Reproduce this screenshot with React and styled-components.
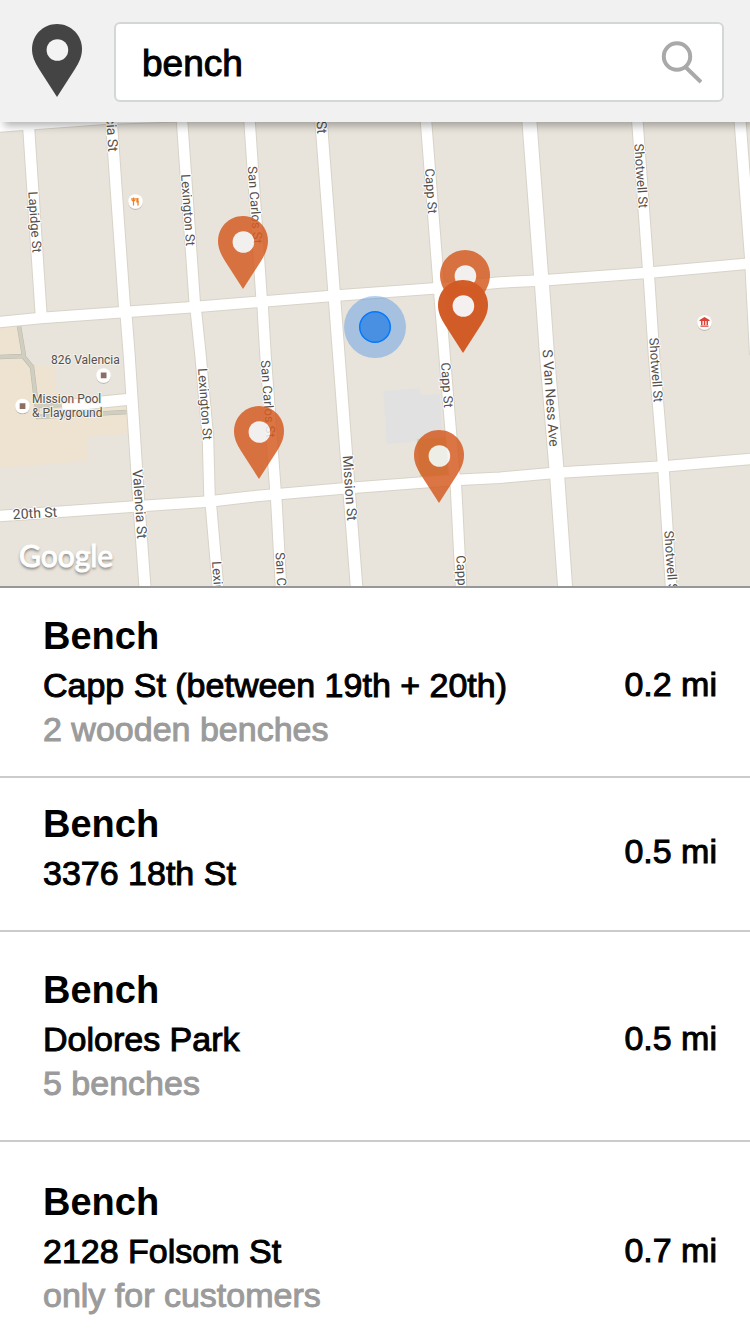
import React, { useState } from "react";
import styled, { createGlobalStyle } from "styled-components";

const MAP_WIDTH = 750;
const MAP_HEIGHT = 464;

const GlobalStyle = createGlobalStyle`
  *, *::before, *::after { box-sizing: border-box; }
  body {
    margin: 0;
    background: #fff;
    color: #000;
    font-family: "Liberation Sans", Arial, Helvetica, sans-serif;
  }
`;

const Page = styled.main`
  display: flex;
  flex-direction: column;
  width: 100%;
`;

const Header = styled.header`
  position: relative;
  z-index: 1;
  display: flex;
  align-items: center;
  gap: 32px;
  padding: 22px 26px 20px 32px;
  background: #f1f1f1;
  box-shadow: 4px 4px 8px rgba(0, 0, 0, 0.3);
`;

const LogoLink = styled.a`
  display: block;
  flex: none;
  padding-bottom: 4px;
  line-height: 0;
`;

const SearchForm = styled.form`
  display: flex;
  flex: 1;
  align-items: center;
  min-width: 0;
  height: 80px;
  padding: 0 20px 0 26px;
  border: 2px solid #d3d7d6;
  border-radius: 6px;
  background: #fff;
`;

const SearchInput = styled.input`
  flex: 1;
  min-width: 0;
  height: 72px;
  padding: 4px 0 0;
  border: 0;
  outline: 0;
  background: transparent;
  color: #000;
  font: 37px "Liberation Sans", Arial, Helvetica, sans-serif;
  -webkit-text-stroke: 1px currentColor;
`;

const IconButton = styled.button`
  flex: none;
  padding: 0;
  border: 0;
  background: none;
  line-height: 0;
  cursor: pointer;
`;

const MapPanel = styled.section`
  position: relative;
  overflow: hidden;
  border-bottom: 2px solid #979797;
`;

const MapSvg = styled.svg`
  display: block;
  width: 100%;
  height: auto;
  font-family: Roboto, "Liberation Sans", sans-serif;
`;

const StreetLabel = styled.text`
  fill: #55504c;
  font-size: ${(p) => p.$size}px;
  text-anchor: middle;
  dominant-baseline: central;
  stroke: #fff;
  stroke-width: 2px;
  paint-order: stroke;
`;

const PlaceLabel = styled.text`
  fill: #55504c;
  font-size: 12px;
  stroke: #f4f1ea;
  stroke-width: 2px;
  paint-order: stroke;
`;

const Attribution = styled.span`
  position: absolute;
  left: 19px;
  bottom: 13px;
  color: #fff;
  font: 400 30px/36px Lato, sans-serif;
  -webkit-text-stroke: 1px #fff;
  text-shadow: 0 2px 3px rgba(0, 0, 0, 0.5);
`;

const PinButton = styled.button`
  position: absolute;
  left: calc(100% * ${(p) => p.$x} / ${MAP_WIDTH});
  top: calc(100% * ${(p) => p.$y} / ${MAP_HEIGHT});
  transform: translate(-50%, -100%);
  padding: 0;
  border: 0;
  background: none;
  line-height: 0;
  opacity: ${(p) => (p.$selected ? 0.98 : 0.85)};
  cursor: pointer;
`;

const Results = styled.ul`
  margin: 0;
  padding: 0;
  list-style: none;
`;

const Row = styled.li`
  display: flex;
  align-items: center;
  justify-content: space-between;
  gap: 24px;
  padding: ${(p) => p.$top}px 33px ${(p) => p.$bottom}px 43px;

  & + & {
    border-top: 2px solid #cbcbcb;
  }
`;

const Details = styled.div`
  flex: 1;
  min-width: 0;
`;

const Title = styled.h2`
  margin: 0;
  font-size: 38px;
  font-weight: 700;
  line-height: 52px;
`;

const Address = styled.p`
  margin: 0;
  font-size: 34px;
  line-height: 46px;
  -webkit-text-stroke: 1px currentColor;
`;

const Note = styled.p`
  margin: 0;
  color: #9b9b9b;
  font-size: 34px;
  line-height: 42px;
  -webkit-text-stroke: 1px currentColor;
`;

const Distance = styled.span`
  flex: none;
  padding-top: 8px;
  font-size: 34px;
  line-height: 46px;
  -webkit-text-stroke: 1px currentColor;
`;

function PinIcon({ color }) {
  return (
    <svg width="50" height="73" viewBox="0 0 50 73" aria-hidden="true">
      <path
        fill={color}
        d="M25 0C11.2 0 0 11.2 0 25c0 7.500 3 13.500 7 20l18 28 18-28c4-6.500 7-12.500 7-20C50 11.200 38.800 0 25 0z"
      />
      <circle cx="25.400" cy="26" r="10.800" fill="#f4f3f3" />
    </svg>
  );
}

function SearchIcon() {
  return (
    <svg width="42" height="44" viewBox="0 0 42 44" aria-hidden="true">
      <g fill="none" stroke="#a9a9a9" strokeWidth="4">
        <circle cx="17" cy="16.500" r="13.200" />
        <path d="M26 27.500L41 42" />
      </g>
    </svg>
  );
}

const roads = [
  { width: 11, points: "28.7,128 41.2,316" },
  { width: 11, points: "-5,126.500 105,118.500 177,116" },
  { width: 11, points: "111,116 124.5,307 126.3,318 129.2,355 138.7,501 145.2,590" },
  { width: 10.5, points: "181.7,116 194.7,302 196,312 200.5,355 208,438 209.5,497 211,506 218.3,590" },
  { width: 10.5, points: "249.2,116 261.5,297 262.7,307 265.5,355 275.3,488 276.3,500 281.2,590" },
  { width: 11.5, points: "320.7,116 334,291 334.7,301 338.8,355 348.5,483 356.8,590" },
  { width: 10.5, points: "425.6,116 438.5,282 444.5,355 454.5,477 456,487 461.2,590" },
  { width: 14, points: "529,116 541,275 542,285 547,355 556.3,467 557.3,478 565.3,590" },
  { width: 10.5, points: "637,116 648,267 649,278 654,355 662.8,461 663.7,472 671.3,590" },
  { width: 11, points: "739.7,116 750.5,258 755.500,355" },
  { width: 10.5, points: "-5,322.4 41,318 125,312 195,307 250,302.5 334,295.7 433,288.500 500,282.5 541,280.5 648,272.8 755,263" },
  { width: 10.5, points: "-5,516.3 138,506.3 209,501.5 250,496.7 340,488.7 455,480 500,477.7 556,472.8 663,466.5 755,458.6" },
  { width: 11, points: "62,406 132,399" },
];

const streetLabels = [
  { text: "Lapidge St", x: 35, y: 222, size: 13, turn: 86 },
  { text: "Valencia St", x: 111, y: 117, size: 14, turn: 86 },
  { text: "Lexington St", x: 188, y: 210, size: 13, turn: 86 },
  { text: "San Carlos St", x: 255, y: 205, size: 13, turn: 86 },
  { text: "Mission St", x: 320, y: 101, size: 14, turn: 86 },
  { text: "Capp St", x: 431, y: 191, size: 13, turn: 86 },
  { text: "Shotwell St", x: 641, y: 176, size: 13, turn: 86 },
  { text: "Lexington St", x: 205, y: 404, size: 13, turn: 86 },
  { text: "San Carlos St", x: 268, y: 399, size: 13, turn: 86 },
  { text: "Capp St", x: 447, y: 385, size: 13, turn: 86 },
  { text: "S Van Ness Ave", x: 551, y: 398, size: 14, turn: 86 },
  { text: "Shotwell St", x: 656, y: 370, size: 13, turn: 86 },
  { text: "Valencia St", x: 140, y: 504, size: 14, turn: 86 },
  { text: "Mission St", x: 350, y: 488, size: 14, turn: 86 },
  { text: "Lexington St", x: 219, y: 597, size: 13, turn: 86 },
  { text: "San Carlos St", x: 282, y: 591, size: 13, turn: 87 },
  { text: "Capp St", x: 462, y: 578, size: 13, turn: 87 },
  { text: "Shotwell St", x: 671, y: 563, size: 13, turn: 86 },
  { text: "20th St", x: 35, y: 513, size: 14, turn: -3 },
];

function StreetMap() {
  return (
    <MapSvg viewBox={`0 122 ${MAP_WIDTH} ${MAP_HEIGHT}`} role="img" aria-label="Street map">
      <defs>
        <filter id="poiShadow" x="-30%" y="-30%" width="160%" height="160%">
          <feDropShadow dx="0" dy="1" stdDeviation="0.700" floodOpacity="0.250" />
        </filter>
      </defs>
      <rect x="0" y="122" width="750" height="464" fill="#e8e4dc" />
      <path
        fill="#eee3d1"
        d="M0 328h17l7 28 9 9h22v35l72 8v26l-39 3v24L0 468z"
      />
      <g fill="none" stroke="#b9b8aa" strokeWidth="4.500">
        <path d="M0 357l23-1 9 11 6 50 89-5M19 326l5 30M36 406l26-1" />
      </g>
      <g fill="none" stroke="#d0cec0" strokeWidth="3.500">
        <path d="M0 357l23-1 9 11 6 50 89-5M19 326l5 30M36 406l26-1" />
      </g>
      <path fill="#e1e1e1" d="M383.300 391l36.700-2.700.7 6.700 19.300-.7 2 43.700-30 4-25 2.300z" />
      <path fill="#c5dba4" d="M417 439l31-2 2 38-30 2z" />
      {roads.map((road) => (
        <polyline
          key={road.points}
          points={road.points}
          fill="none"
          stroke="#d8d3c7"
          strokeWidth={road.width + 2}
          strokeLinejoin="round"
        />
      ))}
      {roads.map((road) => (
        <polyline
          key={road.points}
          points={road.points}
          fill="none"
          stroke="#fff"
          strokeWidth={road.width}
          strokeLinejoin="round"
        />
      ))}
      {streetLabels.map((label) => (
        <StreetLabel
          key={`${label.text}-${label.x}-${label.y}`}
          $size={label.size}
          transform={`translate(${label.x} ${label.y}) rotate(${label.turn})`}
        >
          {label.text}
        </StreetLabel>
      ))}
      <PlaceLabel x="51" y="364">826 Valencia</PlaceLabel>
      <PlaceLabel x="32" y="403">Mission Pool</PlaceLabel>
      <PlaceLabel x="32" y="417">&amp; Playground</PlaceLabel>
      <g fill="#fff" filter="url(#poiShadow)">
        <circle cx="135.500" cy="201.500" r="7.300" />
        <circle cx="704.500" cy="322.500" r="7.300" />
        <circle cx="103.500" cy="375.500" r="7.300" />
        <circle cx="22.500" cy="406" r="7.300" />
      </g>
      <path fill="#8d6e63" d="M100.800 372.500h5.700v5.700h-5.700zM19.700 403.300h5.700v5.700h-5.700z" />
      <g fill="none" stroke="#ef8122">
        <path strokeWidth="1.200" d="M132 198v2l1.500 1.500 1.500-1.500v-2M133.500 197.500v8" />
        <path strokeWidth="2.200" d="M137.400 198v4.500" />
        <path strokeWidth="1.300" d="M138 201v4.500" />
      </g>
      <path
        fill="#db4437"
        d="M704.500 317l5 3v1h-10v-1zM701 321h1.500v4H701zM703.800 321h1.500v4h-1.500zM706.500 321h1.500v4h-1.500zM700.500 325.500h8v1.300h-8z"
      />
      <circle cx="375" cy="327" r="31" fill="#4a90e2" fillOpacity="0.420" />
      <circle cx="375" cy="327" r="15.300" fill="#4a90e2" stroke="#007aff" strokeWidth="1.500" />
    </MapSvg>
  );
}

const pins = [
  { id: "san-carlos-north", x: 243, y: 167 },
  { id: "capp-19th", x: 465, y: 201 },
  { id: "capp-between", x: 463, y: 231 },
  { id: "san-carlos-south", x: 259, y: 357 },
  { id: "capp-20th", x: 439, y: 381 },
];

const results = [
  { address: "Capp St (between 19th + 20th)", note: "2 wooden benches", distance: "0.2 mi", top: 22, bottom: 26 },
  { address: "3376 18th St", distance: "0.5 mi", top: 20, bottom: 34 },
  { address: "Dolores Park", note: "5 benches", distance: "0.5 mi", top: 32, bottom: 36 },
  { address: "2128 Folsom St", note: "only for customers", distance: "0.7 mi", top: 34, bottom: 16 },
];

export default function App() {
  const [query, setQuery] = useState("bench");
  const [selected, setSelected] = useState("capp-between");

  return (
    <>
      <GlobalStyle />
      <Page>
        <Header>
          <LogoLink href="#" aria-label="Home">
            <PinIcon color="#444" />
          </LogoLink>
          <SearchForm role="search" onSubmit={(e) => e.preventDefault()}>
            <SearchInput
              type="text"
              aria-label="Search"
              value={query}
              onChange={(e) => setQuery(e.target.value)}
            />
            <IconButton type="submit" aria-label="Search">
              <SearchIcon />
            </IconButton>
          </SearchForm>
        </Header>
        <MapPanel>
          <StreetMap />
          <Attribution>Google</Attribution>
          {pins.map((pin) => (
            <PinButton
              key={pin.id}
              type="button"
              aria-label="Bench"
              $x={pin.x}
              $y={pin.y}
              $selected={pin.id === selected}
              onClick={() => setSelected(pin.id)}
            >
              <PinIcon color={pin.id === selected ? "#d25a24" : "#d55d24"} />
            </PinButton>
          ))}
        </MapPanel>
        <Results>
          {results.map((item) => (
            <Row key={item.address} $top={item.top} $bottom={item.bottom}>
              <Details>
                <Title>Bench</Title>
                <Address>{item.address}</Address>
                {item.note && <Note>{item.note}</Note>}
              </Details>
              <Distance>{item.distance}</Distance>
            </Row>
          ))}
        </Results>
      </Page>
    </>
  );
}
